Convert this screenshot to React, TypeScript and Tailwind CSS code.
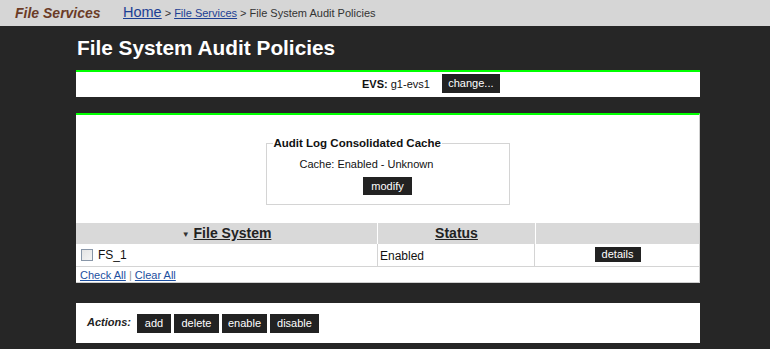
import React from 'react';

const Btn = ({ label, className = '' }: { label: string; className?: string }) => (
  <button className={`bg-[#222222] text-white text-[11px] leading-none flex items-center justify-center ${className}`}>
    {label}
  </button>
);

export default function App() {
  return (
    <div className="min-h-[349px] bg-[#262626] font-['Liberation_Sans',Arial,sans-serif]">
      {/* top crumb bar */}
      <div className="h-[26px] bg-[#d6d6d6] flex items-center">
        <span className="pl-[15px] w-[123px] text-[14px] font-bold italic text-[#6b3b26]">File Services</span>
        <a className="text-[14.5px] text-[#1c3f94] underline">Home</a>
        <span className="text-[11px] text-[#333] ml-[3px]">&gt;</span>
        <a className="text-[11px] text-[#1c3f94] underline ml-[3px]">File Services</a>
        <span className="text-[11px] text-[#333] ml-[3px]">&gt; File System Audit Policies</span>
      </div>

      <div className="ml-[76px] w-[624px]">
        <h1 className="pt-[9px] h-[44px] pl-[1px] text-[20.8px] font-bold text-white leading-[26px]">File System Audit Policies</h1>

        {/* EVS panel */}
        <div className="border-t-2 border-[#00ff00] bg-white h-[27px] flex items-start pt-[2px]">
          <span className="ml-[286px] mt-[2px] text-[11px] text-[#111]"><b>EVS:</b> g1-evs1</span>
          <Btn label="change..." className="ml-[12px] w-[58px] h-[19px]" />
        </div>

        {/* file system panel */}
        <div className="mt-[16px] border-t-2 border-[#00ff00] bg-white border-r border-r-[#cfcfcf] border-b border-b-[#cfcfcf]">
          <div className="h-[108px] flex justify-center pt-[20px]">
            <fieldset className="w-[244px] h-[70px] border border-[#d4d4d4] px-[6px]">
              <legend className="text-[11.5px] font-bold text-[#111] px-[1px]">Audit Log Consolidated Cache</legend>
              <div className="text-[11px] text-[#111] leading-[14px] mt-[5px] pl-[27px]">Cache: Enabled - Unknown</div>
              <div className="flex justify-center mt-[6px]">
                <Btn label="modify" className="w-[49px] h-[18px]" />
              </div>
            </fieldset>
          </div>

          <div className="grid grid-cols-[301px_157px_1fr] gap-x-px bg-white">
            <div className="h-[21px] bg-[#d9d9d9] flex items-center justify-center">
              <span className="text-[8px] text-[#333] mr-[4px] mt-[2px]">▼</span>
              <a className="text-[14px] font-bold text-[#222] underline">File System</a>
            </div>
            <div className="h-[21px] bg-[#d9d9d9] flex items-center justify-center">
              <a className="text-[14px] font-bold text-[#222] underline">Status</a>
            </div>
            <div className="h-[21px] bg-[#d9d9d9]" />
          </div>
          <div className="grid grid-cols-[301px_1px_156px_1px_1fr] h-[23px] border-b border-[#d4d4d4]">
            <div className="flex items-center pl-[5px]">
              <span className="w-[12px] h-[12px] border border-[#8896a8] bg-gradient-to-br from-[#e4e4e4] to-[#f4f4f4]" />
              <span className="ml-[5px] text-[12px] text-[#111]">FS_1</span>
            </div>
            <div className="bg-[#d4d4d4]" />
            <div className="flex items-center pl-[2px] pt-[2px] text-[12px] text-[#111]">Enabled</div>
            <div className="bg-[#d4d4d4]" />
            <div className="flex justify-center items-start pt-[3px] pl-[1px]">
              <Btn label="details" className="w-[46px] h-[15px]" />
            </div>
          </div>
          <div className="h-[15px] pl-[4px] text-[11px] leading-[16px]">
            <a className="text-[#1c4fa0] underline">Check All</a>
            <span className="text-[#999]"> | </span>
            <a className="text-[#1c4fa0] underline">Clear All</a>
          </div>
        </div>

        {/* actions panel */}
        <div className="mt-[20px] bg-white h-[40px] flex items-center pl-[11px]">
          <span className="text-[11px] font-bold italic text-[#222] w-[50px] -mt-[2px]">Actions:</span>
          <div className="flex gap-[3px]">
            <Btn label="add" className="w-[34px] h-[19px]" />
            <Btn label="delete" className="w-[45px] h-[19px]" />
            <Btn label="enable" className="w-[45px] h-[19px]" />
            <Btn label="disable" className="w-[49px] h-[19px]" />
          </div>
        </div>
      </div>
    </div>
  );
}
